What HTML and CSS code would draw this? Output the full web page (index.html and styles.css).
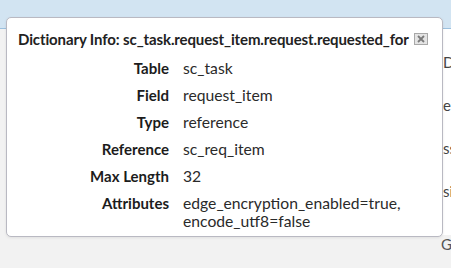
FILE: index.html
```html
<!DOCTYPE html>
<html lang="en">
<head>
    <meta charset="UTF-8">
    <meta name="viewport" content="width=device-width, initial-scale=1.0">
    <title>Dictionary Info</title>
    <link rel="stylesheet" href="styles.css">
</head>
<body>
    <!-- page behind the popup -->
    <header class="top-bar"></header>
    <main class="page">
        <section class="form-panel">
            <div class="form-row">D</div>
            <div class="form-row">e</div>
            <div class="form-row">ss</div>
            <div class="form-row">si</div>
        </section>
        <div class="footer-text">G</div>
    </main>

    <!-- dictionary info popup -->
    <div class="dict-dialog">
        <div class="dict-title">
            <span>Dictionary Info: sc_task.request_item.request.requested_for</span>
            <svg class="close-icon" width="14" height="12" viewBox="0 0 14 12">
                <rect x="0.5" y="0.5" width="13" height="11" fill="#e4e4e4" stroke="#a8a8a8"/>
                <path d="M4 3 L10 9 M10 3 L4 9" stroke="#7a7a7a" stroke-width="1.8"/>
            </svg>
        </div>
        <div class="dict-table">
            <div class="dict-label">Table</div>
            <div class="dict-value">sc_task</div>
            <div class="dict-label">Field</div>
            <div class="dict-value">request_item</div>
            <div class="dict-label">Type</div>
            <div class="dict-value">reference</div>
            <div class="dict-label">Reference</div>
            <div class="dict-value">sc_req_item</div>
            <div class="dict-label">Max Length</div>
            <div class="dict-value">32</div>
            <div class="dict-label">Attributes</div>
            <div class="dict-value">edge_encryption_enabled=true,<br>encode_utf8=false</div>
        </div>
    </div>
</body>
</html>
```

FILE: styles.css
```css
body {
    margin: 0;
    font-family: Lato, "Liberation Sans", sans-serif;
    background-color: #f2f2f2;
    overflow: hidden;
    height: 268px;
}

/* Barra superior */
.top-bar {
    height: 28px;
    background-color: #d2e4f2;
    border-bottom: 1px solid #9cc0de;
}

.form-panel {
    margin-left: 436px;
    padding: 23px 0 0 7px;
    height: 183px;
    background: #fff;
}

.form-row {
    height: 43px;
    line-height: 20px;
    font-size: 15px;
    color: #444;
    white-space: nowrap;
}

.footer-text {
    margin-left: 441px;
    padding-top: 0;
    font-size: 15px;
    line-height: 18px;
    color: #555;
    white-space: nowrap;
}

/* Popup */
.dict-dialog {
    position: absolute;
    left: 6px;
    top: 17px;
    width: 424px;
    height: 218px;
    background: #fff;
    border: 1px solid #b9b9c2;
    border-radius: 5px;
    box-shadow: 0 1px 3px rgba(0, 0, 0, 0.08);
    padding: 0 0 0 11px;
    color: #222;
}

.dict-title {
    display: flex;
    align-items: center;
    gap: 5px;
    margin-top: 12px;
    height: 18px;
    font-size: 15px;
    font-weight: bold;
    letter-spacing: -0.12px;
    white-space: nowrap;
}

.close-icon {
    flex-shrink: 0;
}

.dict-table {
    display: grid;
    grid-template-columns: 151px 1fr;
    column-gap: 14px;
    margin-top: 7px;
    font-size: 15px;
    line-height: 18px;
}

.dict-label {
    text-align: right;
    font-weight: bold;
    color: #1c1c1c;
    padding: 4px 0 5px;
}

.dict-value {
    color: #2a2a2a;
    font-size: 15.7px;
    padding: 4px 0 5px;
}
```
